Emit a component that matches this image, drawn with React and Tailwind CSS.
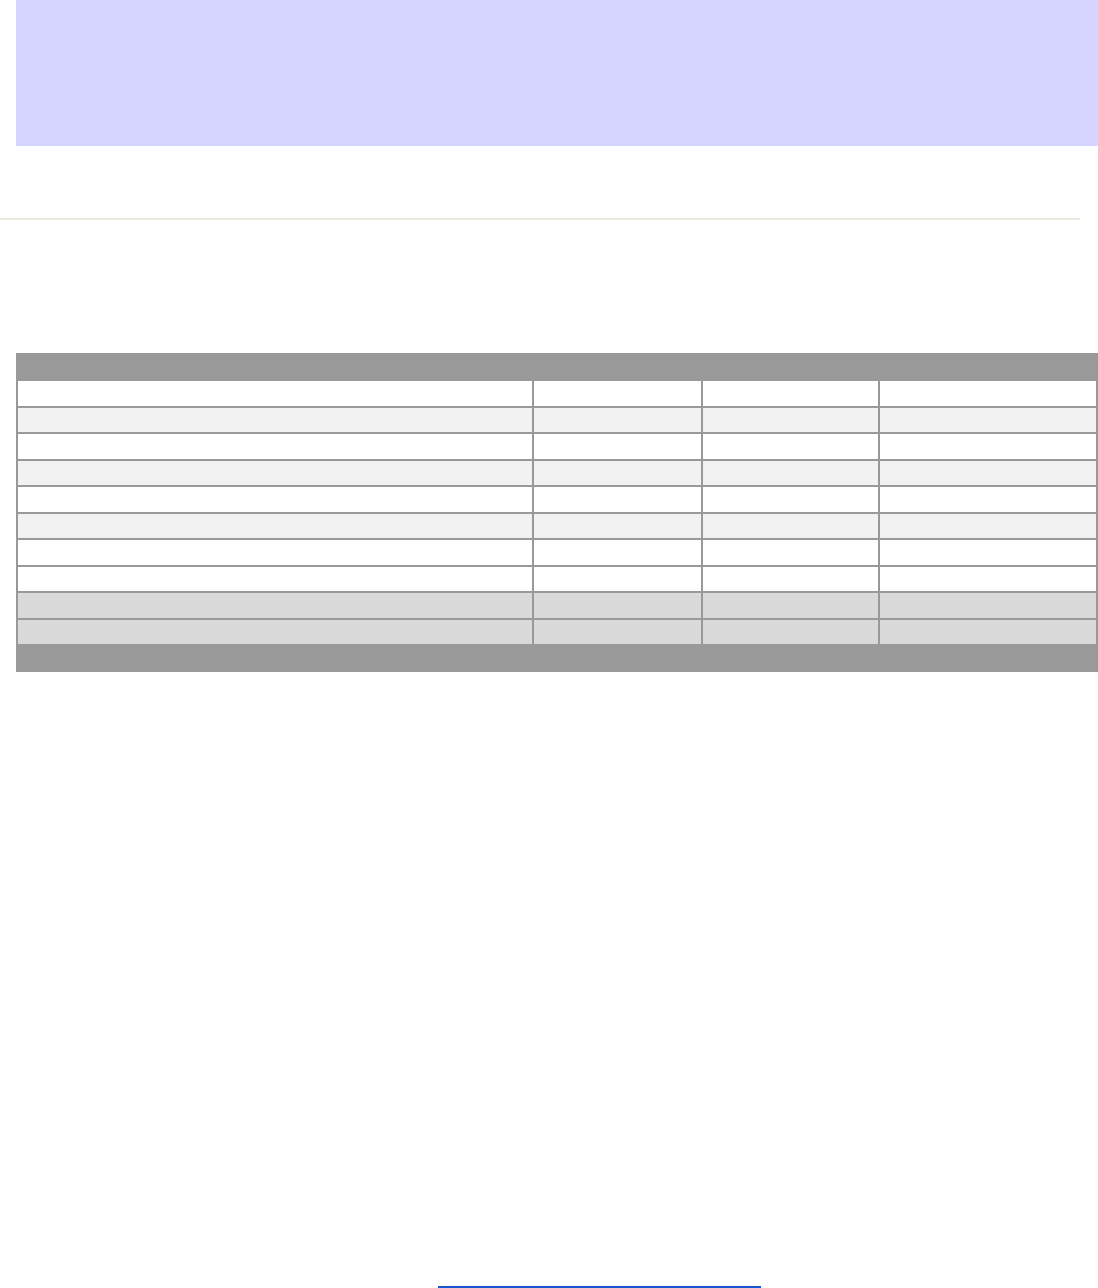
const rows = ["bg-white", "bg-[#f2f2f2]", "bg-white", "bg-[#f2f2f2]", "bg-white", "bg-[#f2f2f2]", "bg-white", "bg-white", "bg-[#d9d9d9]", "bg-[#d9d9d9]"];

function Row({ bg }) {
  return (
    <div className="grid h-[24.5px] grid-cols-[514px_167px_175px_216px] gap-x-[2px]">
      <div className={bg} />
      <div className={bg} />
      <div className={bg} />
      <div className={bg} />
    </div>
  );
}

export default function App() {
  return (
    <div className="h-[1288px] overflow-hidden bg-white font-['Liberation_Sans',sans-serif]">
      {/* banner */}
      <div className="ml-4 h-[146px] bg-[#d5d5ff]" />

      <div className="mt-[72px] h-[2px] w-[1080px] bg-[#ebe8dc]" />

      {/* table */}
      <div className="ml-4 mt-[133px] w-[1082px] bg-[#999999]">
        <div className="h-[28px]" />
        <div className="flex flex-col gap-y-[2px] px-[2px]">
          {rows.map((bg, i) => (
            <Row key={i} bg={bg} />
          ))}
        </div>
        <div className="h-[28px]" />
      </div>

      {/* footer link */}
      <div className="mt-[614px] flex">
        <a href="#" className="ml-[438px] block h-[2px] w-[323px] bg-[#1a56cc]" />
      </div>
    </div>
  );
}
